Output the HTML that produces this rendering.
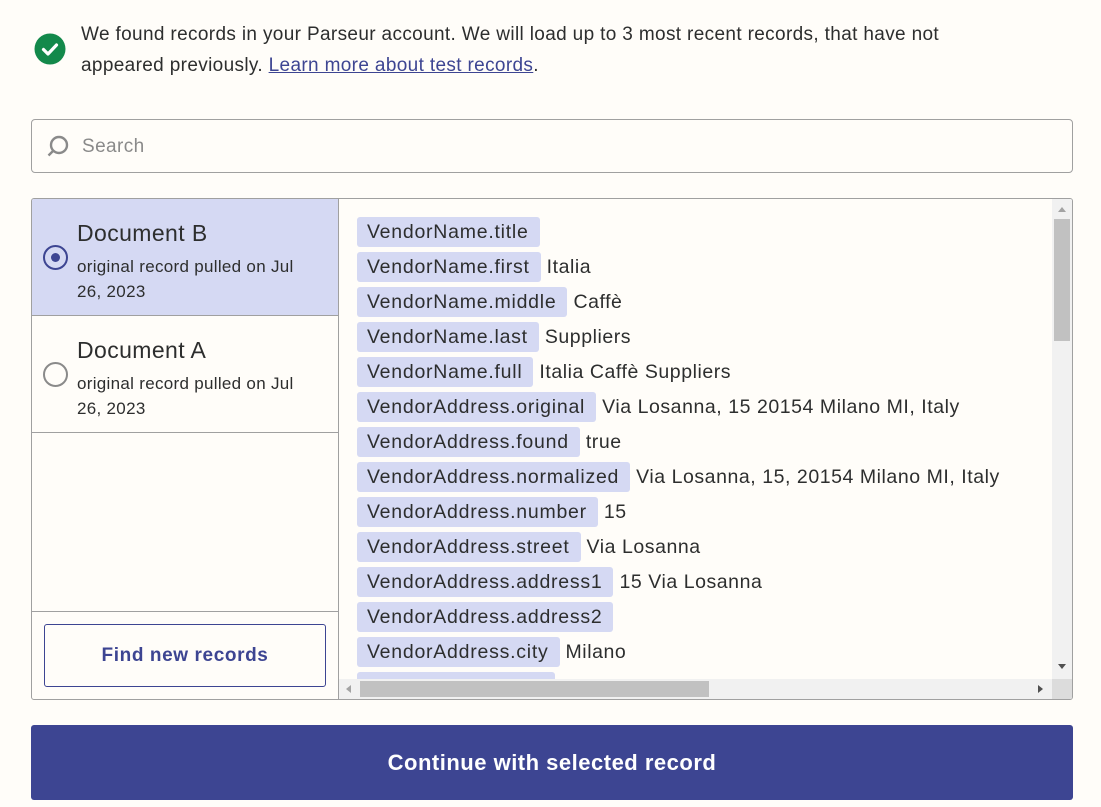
<!DOCTYPE html>
<html><head><meta charset="utf-8"><style>
*{box-sizing:border-box;margin:0;padding:0}
body{width:1101px;height:807px;background:#fffdf9;font-family:"Liberation Sans",sans-serif;color:#2d2e2e;position:relative;overflow:hidden}
.abs{position:absolute}
.msg{left:81px;top:19px;width:930px;font-size:19px;line-height:31px;color:#2d2e2e;letter-spacing:0.35px}
.msg a{color:#3d4592;text-decoration:underline}
.search{left:31px;top:119px;width:1042px;height:54px;border:1px solid #a0a0a0;border-radius:4px;background:#fffdf9}
.search span{position:absolute;left:50px;top:16px;font-size:19px;color:#8a8a8a;letter-spacing:0.4px}
.box{left:31px;top:198px;width:1042px;height:502px;border:1px solid #a0a0a0;border-radius:3px;overflow:hidden}
.left{position:absolute;left:0;top:0;width:307px;height:500px;border-right:1px solid #a0a0a0}
.item{position:absolute;left:0;width:306px;height:117px;border-bottom:1px solid #a0a0a0}
.item .t{position:absolute;left:45px;top:21px;font-size:23px;letter-spacing:0.4px}
.item .s{position:absolute;left:45px;top:55px;font-size:17px;line-height:25px;width:240px;letter-spacing:0.3px}
.radio{position:absolute;left:11px;width:25px;height:25px;border-radius:50%;border:2px solid #8a8a8a}
.btn{position:absolute;left:12px;top:425px;width:282px;height:63px;border:1px solid #3d4592;border-radius:3px;font-weight:bold;font-size:19px;color:#3d4592;text-align:center;line-height:61px;letter-spacing:0.6px}
.row{position:absolute;left:325px;height:30px;font-size:19.5px;line-height:31px;white-space:nowrap;letter-spacing:0.55px}
.tag{display:inline-block;background:#d5d9f3;padding:0 11px 0 10px;border-radius:3px;margin-right:6px;color:#2d2e2e;height:30px;letter-spacing:0.75px}
.cta{left:31px;top:725px;width:1042px;height:75px;background:#3d4592;border-radius:3px;color:#fff;font-weight:bold;font-size:22px;text-align:center;line-height:76px;letter-spacing:0.5px}
</style></head><body>
<svg class="abs" style="left:34px;top:33px" width="32" height="32" viewBox="0 0 32 32"><circle cx="16" cy="16" r="15.5" fill="#13894b"/><path d="M9.5 16.5l4.5 4.5 8.5-9" stroke="#fff" stroke-width="3.2" fill="none" stroke-linecap="round" stroke-linejoin="round"/></svg>
<div class="abs msg">We found records in your Parseur account. We will load up to 3 most recent records, that have not appeared previously. <a>Learn more about test records</a>.</div>
<div class="abs search"><svg style="position:absolute;left:13px;top:14px" width="26" height="26" viewBox="0 0 26 26"><circle cx="14" cy="11" r="8" stroke="#8a8a8a" stroke-width="2.4" fill="none"/><path d="M8 17l-4.5 4.5" stroke="#8a8a8a" stroke-width="2.4"/></svg><span>Search</span></div>
<div class="abs box">
<div class="left">
<div class="item" style="top:0;background:#d5d9f3"><div class="radio" style="top:46px;border-color:#3d4592"><div style="position:absolute;left:6px;top:6px;width:9px;height:9px;border-radius:50%;background:#3d4592"></div></div><div class="t">Document B</div><div class="s">original record pulled on Jul 26, 2023</div></div>
<div class="item" style="top:117px"><div class="radio" style="top:46px"></div><div class="t">Document A</div><div class="s">original record pulled on Jul 26, 2023</div></div>
<div style="position:absolute;left:0;top:412px;width:306px;border-top:1px solid #a0a0a0"></div>
<div class="btn">Find new records</div>
</div>
<div class="row" style="top:18px"><span class="tag">VendorName.title</span></div>
<div class="row" style="top:53px"><span class="tag">VendorName.first</span>Italia</div>
<div class="row" style="top:88px"><span class="tag">VendorName.middle</span>Caffè</div>
<div class="row" style="top:123px"><span class="tag">VendorName.last</span>Suppliers</div>
<div class="row" style="top:158px"><span class="tag">VendorName.full</span>Italia Caffè Suppliers</div>
<div class="row" style="top:193px"><span class="tag">VendorAddress.original</span>Via Losanna, 15 20154 Milano MI, Italy</div>
<div class="row" style="top:228px"><span class="tag">VendorAddress.found</span>true</div>
<div class="row" style="top:263px"><span class="tag">VendorAddress.normalized</span>Via Losanna, 15, 20154 Milano MI, Italy</div>
<div class="row" style="top:298px"><span class="tag">VendorAddress.number</span>15</div>
<div class="row" style="top:333px"><span class="tag">VendorAddress.street</span>Via Losanna</div>
<div class="row" style="top:368px"><span class="tag">VendorAddress.address1</span>15 Via Losanna</div>
<div class="row" style="top:403px"><span class="tag">VendorAddress.address2</span></div>
<div class="row" style="top:438px"><span class="tag">VendorAddress.city</span>Milano</div>
<div class="row" style="top:473px"><span class="tag" style="width:198px">&nbsp;</span></div>
<div style="position:absolute;left:1020px;top:0;width:20px;height:480px;background:#f1f1f1"><div style="position:absolute;left:2px;top:20px;width:16px;height:122px;background:#c1c1c1"></div><div style="position:absolute;left:6px;top:8px;border:4px solid transparent;border-bottom:5px solid #a3a3a3;border-top:0"></div><div style="position:absolute;left:6px;top:465px;border:4px solid transparent;border-top:5px solid #505050;border-bottom:0"></div></div>
<div style="position:absolute;left:307px;top:480px;width:733px;height:20px;background:#f1f1f1"><div style="position:absolute;left:21px;top:2px;width:349px;height:16px;background:#c1c1c1"></div><div style="position:absolute;left:7px;top:6px;border:4px solid transparent;border-right:5px solid #a3a3a3;border-left:0"></div><div style="position:absolute;left:699px;top:6px;border:4px solid transparent;border-left:5px solid #505050;border-right:0"></div></div>
<div style="position:absolute;left:1020px;top:480px;width:20px;height:20px;background:#dcdcdc"></div>
</div>
<div class="abs cta">Continue with selected record</div>
</body></html>
